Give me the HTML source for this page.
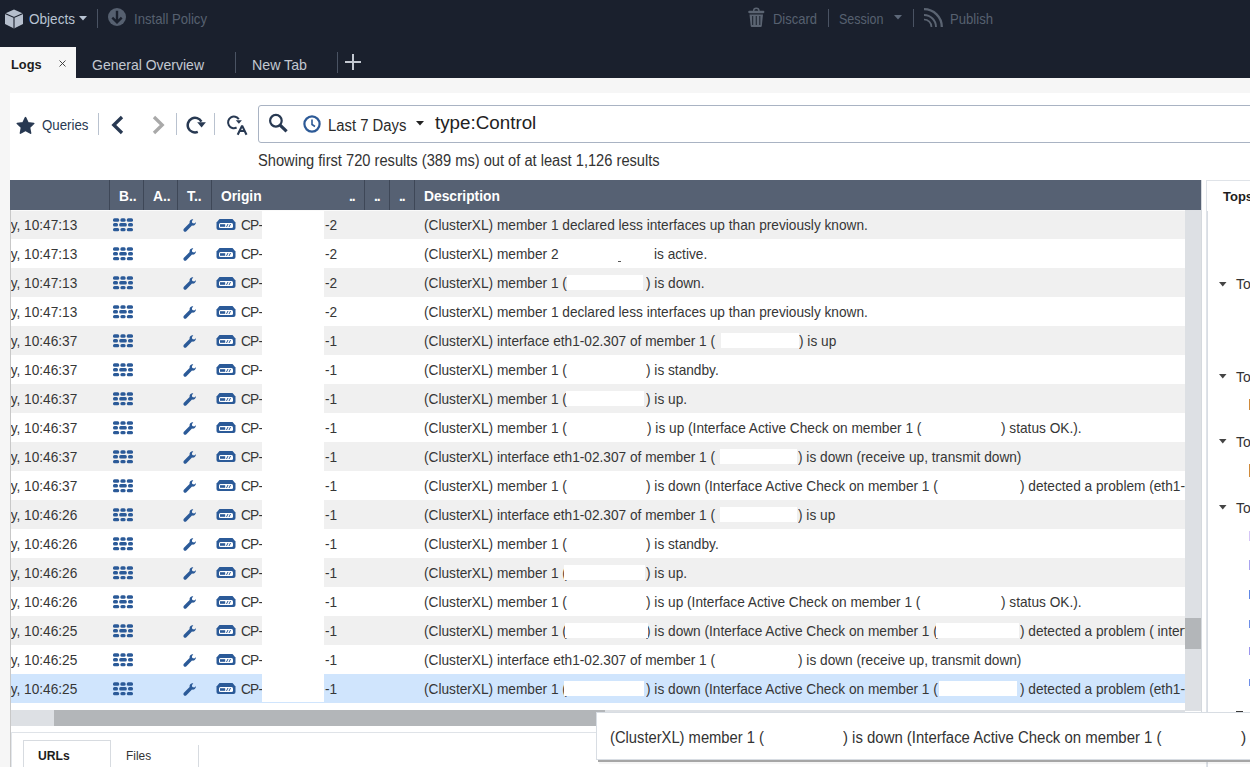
<!DOCTYPE html>
<html><head><meta charset="utf-8"><style>
*{margin:0;padding:0;box-sizing:border-box}
html,body{width:1250px;height:767px;overflow:hidden;background:#f6f6f6;font-family:"Liberation Sans", sans-serif;position:relative}
.abs{position:absolute;white-space:nowrap}
#top{position:absolute;left:0;top:0;width:1250px;height:78px;background:#1a202d}
.tb{position:absolute;font-size:13.3px;color:#576170;white-space:nowrap;line-height:16px}
.sep{position:absolute;width:1px;background:#4a5363}
.tab{position:absolute;font-size:14px;color:#c3c8d1;white-space:nowrap;line-height:16px}
#panel{position:absolute;left:10px;top:93px;width:1240px;height:674px;background:#fff}
#grid{position:absolute;left:10px;top:180px;width:1191px;height:531px;overflow:hidden;background:#fff}
#hdr{position:absolute;left:0;top:0;width:1191px;height:30px;background:#566173}
.hs{position:absolute;top:0;width:1px;height:30px;background:#3e4757}
.ht{position:absolute;top:9px;font-size:13.8px;font-weight:bold;color:#fff;white-space:nowrap;line-height:16px}
.row{position:absolute;left:0;width:1175px;height:29px;overflow:hidden}
.t{position:absolute;top:7px;font-size:14.5px;color:#363636;white-space:nowrap;line-height:16px;transform:scaleX(0.943);transform-origin:0 0}
.ic{position:absolute;line-height:0}
.ic svg{display:block}
.redact{position:absolute;top:0;width:62px;height:29px;background:#fff}
.box{position:absolute;top:7px;height:15px;background:#fff}
</style></head><body>
<div id="top">
  <svg class="abs" style="left:4px;top:9px" width="20" height="20" viewBox="0 0 20 20"><path d="M10 0.5 L19 4.5 V15 L10 19.5 L1 15 V4.5 Z" fill="#b6bfcd"/><path d="M1 4.5 L10 8.5 L19 4.5 M10 8.5 V19.5" stroke="#1a202d" stroke-width="1.1" fill="none"/></svg>
  <div class="tb" style="left:29px;top:11px;font-size:14.5px;color:#b8c3d3;transform-origin:0 0;transform:scaleX(0.935)">Objects</div>
  <svg class="abs" style="left:79px;top:16px" width="8" height="5"><path d="M0 0 H8 L4 4.5 Z" fill="#b8c3d3"/></svg>
  <div class="sep" style="left:97px;top:9px;height:19px"></div>
  <svg class="abs" style="left:108px;top:8px" width="18" height="18" viewBox="0 0 18 18"><circle cx="9" cy="9" r="9" fill="#566070"/><path d="M9 2.8 V14 M4.3 9.6 L9 14.3 L13.7 9.6" stroke="#1a202d" stroke-width="2.4" fill="none"/></svg>
  <div class="tb" style="left:134px;top:11px;font-size:14.5px;transform-origin:0 0;transform:scaleX(0.906)">Install Policy</div>
  <svg class="abs" style="left:748px;top:7px" width="17" height="21" viewBox="0 0 17 21"><path d="M5.6 4 A2.7 2.7 0 0 1 11 4" stroke="#5b6472" stroke-width="1.4" fill="none"/><rect x="0.2" y="3.8" width="16.2" height="2.4" rx="1.1" fill="#5b6472"/><path d="M1.5 7.5 H15 L13.8 19 Q13.7 20 12.7 20 H3.8 Q2.8 20 2.7 19 Z" fill="#5b6472"/><path d="M4.7 9 V18 M8.25 9 V18 M11.8 9 V18" stroke="#1a202d" stroke-width="1"/></svg>
  <div class="tb" style="left:773px;top:11px;font-size:14.5px;transform-origin:0 0;transform:scaleX(0.895)">Discard</div>
  <div class="sep" style="left:828px;top:9px;height:18px"></div>
  <div class="tb" style="left:839px;top:11px;font-size:14.5px;transform-origin:0 0;transform:scaleX(0.862)">Session</div>
  <svg class="abs" style="left:894px;top:15px" width="8" height="5"><path d="M0 0 H8 L4 4.5 Z" fill="#5d6879"/></svg>
  <div class="sep" style="left:913px;top:9px;height:18px"></div>
  <svg class="abs" style="left:918px;top:2px" width="32" height="30" viewBox="0 0 32 30"><path d="M6 7.2 A17.8 17.8 0 0 1 23.8 25" stroke="#5b6472" stroke-width="2.3" fill="none"/><path d="M6 13 A12 12 0 0 1 18 25" stroke="#5b6472" stroke-width="1.9" fill="none"/><path d="M6 17.5 A7.5 7.5 0 0 1 13.5 25" stroke="#5b6472" stroke-width="1.7" fill="none"/></svg>
  <div class="tb" style="left:950px;top:11px;font-size:14.5px;transform-origin:0 0;transform:scaleX(0.904)">Publish</div>
</div>
<div class="abs" style="left:0;top:47px;width:76px;height:31px;background:#f6f6f6"></div>
<div class="tab" style="left:11px;top:57px;font-weight:bold;color:#1d1d1d;font-size:12.8px">Logs</div>
<svg class="abs" style="left:59px;top:60px" width="7" height="7"><path d="M0.5 0.5 L6.5 6.5 M6.5 0.5 L0.5 6.5" stroke="#333" stroke-width="0.9"/></svg>
<div class="tab" style="left:92px;top:57px;font-size:14.5px;transform-origin:0 0;transform:scaleX(0.965)">General Overview</div>
<div class="sep" style="left:235px;top:52px;height:21px;background:#4a5363"></div>
<div class="tab" style="left:252px;top:57px;font-size:14.5px;transform-origin:0 0;transform:scaleX(0.979)">New Tab</div>
<div class="sep" style="left:337px;top:52px;height:21px;background:#4a5363"></div>
<svg class="abs" style="left:345px;top:54px" width="16" height="16"><path d="M8 0 V16 M0 8 H16" stroke="#c3c8d1" stroke-width="2"/></svg>

<div id="panel"></div>
<svg class="abs" style="left:16px;top:116px" width="19" height="18" viewBox="0 0 19 18"><path d="M9.50 1.60 L11.97 6.80 L17.68 7.54 L13.49 11.50 L14.55 17.16 L9.50 14.40 L4.45 17.16 L5.51 11.50 L1.32 7.54 L7.03 6.80 Z" fill="#283952" stroke="#283952" stroke-width="1.6" stroke-linejoin="round"/></svg>
<div class="abs" style="left:42px;top:117px;font-size:14.5px;color:#283952;line-height:16px;transform-origin:0 0;transform:scaleX(0.916)">Queries</div>
<div class="sep" style="left:98px;top:113px;height:22px;background:#b9c2cf"></div>
<svg class="abs" style="left:110px;top:115px" width="14" height="20"><path d="M12 2 L3.8 10 L12 18" stroke="#283952" stroke-width="3.3" fill="none"/></svg>
<svg class="abs" style="left:152px;top:115px" width="14" height="20"><path d="M2 2 L10.2 10 L2 18" stroke="#a9a9a9" stroke-width="3.3" fill="none"/></svg>
<div class="sep" style="left:176px;top:113px;height:22px;background:#b9c2cf"></div>
<svg class="abs" style="left:186px;top:115px" width="21" height="20" viewBox="0 0 21 20"><path d="M11.8 16.9 A7.3 7.3 0 1 1 15.4 6.6" stroke="#283952" stroke-width="2.5" fill="none"/><path d="M11.2 7.2 L19.9 7.2 L15.6 12.6 Z" fill="#283952"/></svg>
<div class="sep" style="left:214px;top:113px;height:22px;background:#b9c2cf"></div>
<svg class="abs" style="left:226px;top:115px" width="22" height="21" viewBox="0 0 22 21"><path d="M10.6 12.5 A5.8 5.8 0 1 1 12.8 4.3" stroke="#283952" stroke-width="2" fill="none"/><path d="M9.8 5.2 L15.9 5.2 L12.9 8.7 Z" fill="#283952"/><path d="M11.7 19.8 L16.1 10.6 L20.5 19.8 M13.3 16 H18.9" stroke="#283952" stroke-width="2.1" stroke-linejoin="bevel" fill="none"/></svg>
<div class="abs" style="left:258px;top:105px;width:1000px;height:38px;border:1px solid #a9b3c3;border-radius:3px;background:#fff"></div>
<svg class="abs" style="left:268px;top:113px" width="21" height="21" viewBox="0 0 21 21"><circle cx="7.9" cy="7.75" r="5.8" stroke="#283952" stroke-width="2.2" fill="none"/><path d="M11.8 11.8 L18.6 18.4" stroke="#283952" stroke-width="3.2"/></svg>
<svg class="abs" style="left:303px;top:115px" width="18" height="18" viewBox="0 0 18 18"><circle cx="9" cy="9" r="7.6" stroke="#2d5a97" stroke-width="2.2" fill="none"/><path d="M9 4.5 V9.5 L12 11.5" stroke="#2d5a97" stroke-width="1.6" fill="none"/></svg>
<div class="abs" style="left:328px;top:117px;font-size:15.6px;color:#2a2a2a;line-height:18px;transform:scaleX(0.953);transform-origin:0 0">Last 7 Days</div>
<svg class="abs" style="left:416px;top:121px" width="8" height="5"><path d="M0 0 H8 L4 4.5 Z" fill="#222"/></svg>
<div class="abs" style="left:435px;top:112px;font-size:18.8px;color:#222;line-height:22px">type:Control</div>
<div class="abs" style="left:258px;top:152px;font-size:15.6px;color:#333;line-height:17px;transform:scaleX(0.940);transform-origin:0 0">Showing first 720 results (389 ms) out of at least 1,126 results</div>

<div id="grid">
 <div id="hdr">
  <div class="hs" style="left:99px"></div><div class="hs" style="left:133px"></div><div class="hs" style="left:167px"></div><div class="hs" style="left:201px"></div>
  <div class="hs" style="left:354px"></div><div class="hs" style="left:379px"></div><div class="hs" style="left:404px"></div>
  <div class="ht" style="left:109px">B..</div><div class="ht" style="left:143px">A..</div><div class="ht" style="left:177px">T..</div>
  <div class="ht" style="left:211px">Origin</div>
  <div class="ht" style="left:339px;letter-spacing:-1px">..</div><div class="ht" style="left:364px;letter-spacing:-1px">..</div><div class="ht" style="left:389px;letter-spacing:-1px">..</div>
  <div class="ht" style="left:414px">Description</div>
 </div>
<div class="row" style="top:30px;background:#f0f0f0"><span class="t" style="left:-29px">Today, 10:47:13</span><span class="ic" style="left:103px;top:8px"><svg width="20" height="14" viewBox="0 0 20 14"><g fill="#2b5a98"><rect x="0" y="0.3" width="6.2" height="3.4" rx="1.5"/><rect x="7.4" y="0.3" width="5.2" height="3.4" rx="1.5"/><rect x="13.8" y="0.3" width="6.2" height="3.4" rx="1.5"/><rect x="0" y="5.1" width="5" height="3.4" rx="1.5"/><rect x="6.2" y="5.1" width="7.6" height="3.4" rx="1.5"/><rect x="15" y="5.1" width="5" height="3.4" rx="1.5"/><rect x="0" y="9.9" width="6.2" height="3.4" rx="1.5"/><rect x="7.4" y="9.9" width="5.2" height="3.4" rx="1.5"/><rect x="13.8" y="9.9" width="6.2" height="3.4" rx="1.5"/></g></svg></span><span class="ic" style="left:173px;top:9px"><svg width="14" height="14" viewBox="0 0 14 14"><path fill="#2b5a98" d="M9.2 0.3 C7.4 0.6 6.2 2.3 6.6 4.1 L0.9 9.8 C0.1 10.6 0.3 11.8 1.1 12.4 C1.8 13 2.8 12.9 3.4 12.2 L9 6.6 C10.8 7 12.6 5.8 12.9 4 L13 3.2 L11.2 4.6 L9.3 4.1 L8.9 2.3 L10.3 0.3 Z"/></svg></span><span class="ic" style="left:206px;top:9px"><svg width="20" height="11" viewBox="0 0 20 11"><path fill="#2b5a98" d="M3.5 0 H16.5 L19.5 3.5 V9 Q19.5 11 17.5 11 H2.5 Q0.5 11 0.5 9 V3.5 Z"/><rect x="3" y="4" width="14" height="5" rx="1.5" fill="#fff"/><rect x="4" y="5.2" width="5.2" height="2.6" fill="#2b5a98"/><path d="M10.5 8 L12 5 M13 8 L14.5 5" stroke="#2b5a98" stroke-width="1"/></svg></span><span class="t" style="left:231px;letter-spacing:-0.8px">CP-</span><span class="redact" style="left:252px"></span><span class="t" style="left:315px">-2</span><span class="t" style="left:414px">(ClusterXL) member 1 declared less interfaces up than previously known.</span></div>
<div class="row" style="top:59px;background:#ffffff"><span class="t" style="left:-29px">Today, 10:47:13</span><span class="ic" style="left:103px;top:8px"><svg width="20" height="14" viewBox="0 0 20 14"><g fill="#2b5a98"><rect x="0" y="0.3" width="6.2" height="3.4" rx="1.5"/><rect x="7.4" y="0.3" width="5.2" height="3.4" rx="1.5"/><rect x="13.8" y="0.3" width="6.2" height="3.4" rx="1.5"/><rect x="0" y="5.1" width="5" height="3.4" rx="1.5"/><rect x="6.2" y="5.1" width="7.6" height="3.4" rx="1.5"/><rect x="15" y="5.1" width="5" height="3.4" rx="1.5"/><rect x="0" y="9.9" width="6.2" height="3.4" rx="1.5"/><rect x="7.4" y="9.9" width="5.2" height="3.4" rx="1.5"/><rect x="13.8" y="9.9" width="6.2" height="3.4" rx="1.5"/></g></svg></span><span class="ic" style="left:173px;top:9px"><svg width="14" height="14" viewBox="0 0 14 14"><path fill="#2b5a98" d="M9.2 0.3 C7.4 0.6 6.2 2.3 6.6 4.1 L0.9 9.8 C0.1 10.6 0.3 11.8 1.1 12.4 C1.8 13 2.8 12.9 3.4 12.2 L9 6.6 C10.8 7 12.6 5.8 12.9 4 L13 3.2 L11.2 4.6 L9.3 4.1 L8.9 2.3 L10.3 0.3 Z"/></svg></span><span class="ic" style="left:206px;top:9px"><svg width="20" height="11" viewBox="0 0 20 11"><path fill="#2b5a98" d="M3.5 0 H16.5 L19.5 3.5 V9 Q19.5 11 17.5 11 H2.5 Q0.5 11 0.5 9 V3.5 Z"/><rect x="3" y="4" width="14" height="5" rx="1.5" fill="#fff"/><rect x="4" y="5.2" width="5.2" height="2.6" fill="#2b5a98"/><path d="M10.5 8 L12 5 M13 8 L14.5 5" stroke="#2b5a98" stroke-width="1"/></svg></span><span class="t" style="left:231px;letter-spacing:-0.8px">CP-</span><span class="redact" style="left:252px"></span><span class="t" style="left:315px">-2</span><span class="t" style="left:414px">(ClusterXL) member 2</span><span class="t" style="left:644px">is active.</span><span style="position:absolute;left:608px;top:22px;width:3px;height:1px;background:#555"></span></div>
<div class="row" style="top:88px;background:#f0f0f0"><span class="t" style="left:-29px">Today, 10:47:13</span><span class="ic" style="left:103px;top:8px"><svg width="20" height="14" viewBox="0 0 20 14"><g fill="#2b5a98"><rect x="0" y="0.3" width="6.2" height="3.4" rx="1.5"/><rect x="7.4" y="0.3" width="5.2" height="3.4" rx="1.5"/><rect x="13.8" y="0.3" width="6.2" height="3.4" rx="1.5"/><rect x="0" y="5.1" width="5" height="3.4" rx="1.5"/><rect x="6.2" y="5.1" width="7.6" height="3.4" rx="1.5"/><rect x="15" y="5.1" width="5" height="3.4" rx="1.5"/><rect x="0" y="9.9" width="6.2" height="3.4" rx="1.5"/><rect x="7.4" y="9.9" width="5.2" height="3.4" rx="1.5"/><rect x="13.8" y="9.9" width="6.2" height="3.4" rx="1.5"/></g></svg></span><span class="ic" style="left:173px;top:9px"><svg width="14" height="14" viewBox="0 0 14 14"><path fill="#2b5a98" d="M9.2 0.3 C7.4 0.6 6.2 2.3 6.6 4.1 L0.9 9.8 C0.1 10.6 0.3 11.8 1.1 12.4 C1.8 13 2.8 12.9 3.4 12.2 L9 6.6 C10.8 7 12.6 5.8 12.9 4 L13 3.2 L11.2 4.6 L9.3 4.1 L8.9 2.3 L10.3 0.3 Z"/></svg></span><span class="ic" style="left:206px;top:9px"><svg width="20" height="11" viewBox="0 0 20 11"><path fill="#2b5a98" d="M3.5 0 H16.5 L19.5 3.5 V9 Q19.5 11 17.5 11 H2.5 Q0.5 11 0.5 9 V3.5 Z"/><rect x="3" y="4" width="14" height="5" rx="1.5" fill="#fff"/><rect x="4" y="5.2" width="5.2" height="2.6" fill="#2b5a98"/><path d="M10.5 8 L12 5 M13 8 L14.5 5" stroke="#2b5a98" stroke-width="1"/></svg></span><span class="t" style="left:231px;letter-spacing:-0.8px">CP-</span><span class="redact" style="left:252px"></span><span class="t" style="left:315px">-2</span><span class="t" style="left:414px">(ClusterXL) member 1 (</span><span class="t" style="left:636px">) is down.</span><span class="box" style="left:557px;width:76px"></span></div>
<div class="row" style="top:117px;background:#ffffff"><span class="t" style="left:-29px">Today, 10:47:13</span><span class="ic" style="left:103px;top:8px"><svg width="20" height="14" viewBox="0 0 20 14"><g fill="#2b5a98"><rect x="0" y="0.3" width="6.2" height="3.4" rx="1.5"/><rect x="7.4" y="0.3" width="5.2" height="3.4" rx="1.5"/><rect x="13.8" y="0.3" width="6.2" height="3.4" rx="1.5"/><rect x="0" y="5.1" width="5" height="3.4" rx="1.5"/><rect x="6.2" y="5.1" width="7.6" height="3.4" rx="1.5"/><rect x="15" y="5.1" width="5" height="3.4" rx="1.5"/><rect x="0" y="9.9" width="6.2" height="3.4" rx="1.5"/><rect x="7.4" y="9.9" width="5.2" height="3.4" rx="1.5"/><rect x="13.8" y="9.9" width="6.2" height="3.4" rx="1.5"/></g></svg></span><span class="ic" style="left:173px;top:9px"><svg width="14" height="14" viewBox="0 0 14 14"><path fill="#2b5a98" d="M9.2 0.3 C7.4 0.6 6.2 2.3 6.6 4.1 L0.9 9.8 C0.1 10.6 0.3 11.8 1.1 12.4 C1.8 13 2.8 12.9 3.4 12.2 L9 6.6 C10.8 7 12.6 5.8 12.9 4 L13 3.2 L11.2 4.6 L9.3 4.1 L8.9 2.3 L10.3 0.3 Z"/></svg></span><span class="ic" style="left:206px;top:9px"><svg width="20" height="11" viewBox="0 0 20 11"><path fill="#2b5a98" d="M3.5 0 H16.5 L19.5 3.5 V9 Q19.5 11 17.5 11 H2.5 Q0.5 11 0.5 9 V3.5 Z"/><rect x="3" y="4" width="14" height="5" rx="1.5" fill="#fff"/><rect x="4" y="5.2" width="5.2" height="2.6" fill="#2b5a98"/><path d="M10.5 8 L12 5 M13 8 L14.5 5" stroke="#2b5a98" stroke-width="1"/></svg></span><span class="t" style="left:231px;letter-spacing:-0.8px">CP-</span><span class="redact" style="left:252px"></span><span class="t" style="left:315px">-2</span><span class="t" style="left:414px">(ClusterXL) member 1 declared less interfaces up than previously known.</span></div>
<div class="row" style="top:146px;background:#f0f0f0"><span class="t" style="left:-29px">Today, 10:46:37</span><span class="ic" style="left:103px;top:8px"><svg width="20" height="14" viewBox="0 0 20 14"><g fill="#2b5a98"><rect x="0" y="0.3" width="6.2" height="3.4" rx="1.5"/><rect x="7.4" y="0.3" width="5.2" height="3.4" rx="1.5"/><rect x="13.8" y="0.3" width="6.2" height="3.4" rx="1.5"/><rect x="0" y="5.1" width="5" height="3.4" rx="1.5"/><rect x="6.2" y="5.1" width="7.6" height="3.4" rx="1.5"/><rect x="15" y="5.1" width="5" height="3.4" rx="1.5"/><rect x="0" y="9.9" width="6.2" height="3.4" rx="1.5"/><rect x="7.4" y="9.9" width="5.2" height="3.4" rx="1.5"/><rect x="13.8" y="9.9" width="6.2" height="3.4" rx="1.5"/></g></svg></span><span class="ic" style="left:173px;top:9px"><svg width="14" height="14" viewBox="0 0 14 14"><path fill="#2b5a98" d="M9.2 0.3 C7.4 0.6 6.2 2.3 6.6 4.1 L0.9 9.8 C0.1 10.6 0.3 11.8 1.1 12.4 C1.8 13 2.8 12.9 3.4 12.2 L9 6.6 C10.8 7 12.6 5.8 12.9 4 L13 3.2 L11.2 4.6 L9.3 4.1 L8.9 2.3 L10.3 0.3 Z"/></svg></span><span class="ic" style="left:206px;top:9px"><svg width="20" height="11" viewBox="0 0 20 11"><path fill="#2b5a98" d="M3.5 0 H16.5 L19.5 3.5 V9 Q19.5 11 17.5 11 H2.5 Q0.5 11 0.5 9 V3.5 Z"/><rect x="3" y="4" width="14" height="5" rx="1.5" fill="#fff"/><rect x="4" y="5.2" width="5.2" height="2.6" fill="#2b5a98"/><path d="M10.5 8 L12 5 M13 8 L14.5 5" stroke="#2b5a98" stroke-width="1"/></svg></span><span class="t" style="left:231px;letter-spacing:-0.8px">CP-</span><span class="redact" style="left:252px"></span><span class="t" style="left:315px">-1</span><span class="t" style="left:414px">(ClusterXL) interface eth1-02.307 of member 1 (</span><span class="t" style="left:789px">) is up</span><span class="box" style="left:711px;width:78px"></span></div>
<div class="row" style="top:175px;background:#ffffff"><span class="t" style="left:-29px">Today, 10:46:37</span><span class="ic" style="left:103px;top:8px"><svg width="20" height="14" viewBox="0 0 20 14"><g fill="#2b5a98"><rect x="0" y="0.3" width="6.2" height="3.4" rx="1.5"/><rect x="7.4" y="0.3" width="5.2" height="3.4" rx="1.5"/><rect x="13.8" y="0.3" width="6.2" height="3.4" rx="1.5"/><rect x="0" y="5.1" width="5" height="3.4" rx="1.5"/><rect x="6.2" y="5.1" width="7.6" height="3.4" rx="1.5"/><rect x="15" y="5.1" width="5" height="3.4" rx="1.5"/><rect x="0" y="9.9" width="6.2" height="3.4" rx="1.5"/><rect x="7.4" y="9.9" width="5.2" height="3.4" rx="1.5"/><rect x="13.8" y="9.9" width="6.2" height="3.4" rx="1.5"/></g></svg></span><span class="ic" style="left:173px;top:9px"><svg width="14" height="14" viewBox="0 0 14 14"><path fill="#2b5a98" d="M9.2 0.3 C7.4 0.6 6.2 2.3 6.6 4.1 L0.9 9.8 C0.1 10.6 0.3 11.8 1.1 12.4 C1.8 13 2.8 12.9 3.4 12.2 L9 6.6 C10.8 7 12.6 5.8 12.9 4 L13 3.2 L11.2 4.6 L9.3 4.1 L8.9 2.3 L10.3 0.3 Z"/></svg></span><span class="ic" style="left:206px;top:9px"><svg width="20" height="11" viewBox="0 0 20 11"><path fill="#2b5a98" d="M3.5 0 H16.5 L19.5 3.5 V9 Q19.5 11 17.5 11 H2.5 Q0.5 11 0.5 9 V3.5 Z"/><rect x="3" y="4" width="14" height="5" rx="1.5" fill="#fff"/><rect x="4" y="5.2" width="5.2" height="2.6" fill="#2b5a98"/><path d="M10.5 8 L12 5 M13 8 L14.5 5" stroke="#2b5a98" stroke-width="1"/></svg></span><span class="t" style="left:231px;letter-spacing:-0.8px">CP-</span><span class="redact" style="left:252px"></span><span class="t" style="left:315px">-1</span><span class="t" style="left:414px">(ClusterXL) member 1 (</span><span class="t" style="left:636px">) is standby.</span></div>
<div class="row" style="top:204px;background:#f0f0f0"><span class="t" style="left:-29px">Today, 10:46:37</span><span class="ic" style="left:103px;top:8px"><svg width="20" height="14" viewBox="0 0 20 14"><g fill="#2b5a98"><rect x="0" y="0.3" width="6.2" height="3.4" rx="1.5"/><rect x="7.4" y="0.3" width="5.2" height="3.4" rx="1.5"/><rect x="13.8" y="0.3" width="6.2" height="3.4" rx="1.5"/><rect x="0" y="5.1" width="5" height="3.4" rx="1.5"/><rect x="6.2" y="5.1" width="7.6" height="3.4" rx="1.5"/><rect x="15" y="5.1" width="5" height="3.4" rx="1.5"/><rect x="0" y="9.9" width="6.2" height="3.4" rx="1.5"/><rect x="7.4" y="9.9" width="5.2" height="3.4" rx="1.5"/><rect x="13.8" y="9.9" width="6.2" height="3.4" rx="1.5"/></g></svg></span><span class="ic" style="left:173px;top:9px"><svg width="14" height="14" viewBox="0 0 14 14"><path fill="#2b5a98" d="M9.2 0.3 C7.4 0.6 6.2 2.3 6.6 4.1 L0.9 9.8 C0.1 10.6 0.3 11.8 1.1 12.4 C1.8 13 2.8 12.9 3.4 12.2 L9 6.6 C10.8 7 12.6 5.8 12.9 4 L13 3.2 L11.2 4.6 L9.3 4.1 L8.9 2.3 L10.3 0.3 Z"/></svg></span><span class="ic" style="left:206px;top:9px"><svg width="20" height="11" viewBox="0 0 20 11"><path fill="#2b5a98" d="M3.5 0 H16.5 L19.5 3.5 V9 Q19.5 11 17.5 11 H2.5 Q0.5 11 0.5 9 V3.5 Z"/><rect x="3" y="4" width="14" height="5" rx="1.5" fill="#fff"/><rect x="4" y="5.2" width="5.2" height="2.6" fill="#2b5a98"/><path d="M10.5 8 L12 5 M13 8 L14.5 5" stroke="#2b5a98" stroke-width="1"/></svg></span><span class="t" style="left:231px;letter-spacing:-0.8px">CP-</span><span class="redact" style="left:252px"></span><span class="t" style="left:315px">-1</span><span class="t" style="left:414px">(ClusterXL) member 1 (</span><span class="t" style="left:636px">) is up.</span><span class="box" style="left:556px;width:78px"></span></div>
<div class="row" style="top:233px;background:#ffffff"><span class="t" style="left:-29px">Today, 10:46:37</span><span class="ic" style="left:103px;top:8px"><svg width="20" height="14" viewBox="0 0 20 14"><g fill="#2b5a98"><rect x="0" y="0.3" width="6.2" height="3.4" rx="1.5"/><rect x="7.4" y="0.3" width="5.2" height="3.4" rx="1.5"/><rect x="13.8" y="0.3" width="6.2" height="3.4" rx="1.5"/><rect x="0" y="5.1" width="5" height="3.4" rx="1.5"/><rect x="6.2" y="5.1" width="7.6" height="3.4" rx="1.5"/><rect x="15" y="5.1" width="5" height="3.4" rx="1.5"/><rect x="0" y="9.9" width="6.2" height="3.4" rx="1.5"/><rect x="7.4" y="9.9" width="5.2" height="3.4" rx="1.5"/><rect x="13.8" y="9.9" width="6.2" height="3.4" rx="1.5"/></g></svg></span><span class="ic" style="left:173px;top:9px"><svg width="14" height="14" viewBox="0 0 14 14"><path fill="#2b5a98" d="M9.2 0.3 C7.4 0.6 6.2 2.3 6.6 4.1 L0.9 9.8 C0.1 10.6 0.3 11.8 1.1 12.4 C1.8 13 2.8 12.9 3.4 12.2 L9 6.6 C10.8 7 12.6 5.8 12.9 4 L13 3.2 L11.2 4.6 L9.3 4.1 L8.9 2.3 L10.3 0.3 Z"/></svg></span><span class="ic" style="left:206px;top:9px"><svg width="20" height="11" viewBox="0 0 20 11"><path fill="#2b5a98" d="M3.5 0 H16.5 L19.5 3.5 V9 Q19.5 11 17.5 11 H2.5 Q0.5 11 0.5 9 V3.5 Z"/><rect x="3" y="4" width="14" height="5" rx="1.5" fill="#fff"/><rect x="4" y="5.2" width="5.2" height="2.6" fill="#2b5a98"/><path d="M10.5 8 L12 5 M13 8 L14.5 5" stroke="#2b5a98" stroke-width="1"/></svg></span><span class="t" style="left:231px;letter-spacing:-0.8px">CP-</span><span class="redact" style="left:252px"></span><span class="t" style="left:315px">-1</span><span class="t" style="left:414px">(ClusterXL) member 1 (</span><span class="t" style="left:637px">) is up (Interface Active Check on member 1 (</span><span class="t" style="left:991px">) status OK.).</span></div>
<div class="row" style="top:262px;background:#f0f0f0"><span class="t" style="left:-29px">Today, 10:46:37</span><span class="ic" style="left:103px;top:8px"><svg width="20" height="14" viewBox="0 0 20 14"><g fill="#2b5a98"><rect x="0" y="0.3" width="6.2" height="3.4" rx="1.5"/><rect x="7.4" y="0.3" width="5.2" height="3.4" rx="1.5"/><rect x="13.8" y="0.3" width="6.2" height="3.4" rx="1.5"/><rect x="0" y="5.1" width="5" height="3.4" rx="1.5"/><rect x="6.2" y="5.1" width="7.6" height="3.4" rx="1.5"/><rect x="15" y="5.1" width="5" height="3.4" rx="1.5"/><rect x="0" y="9.9" width="6.2" height="3.4" rx="1.5"/><rect x="7.4" y="9.9" width="5.2" height="3.4" rx="1.5"/><rect x="13.8" y="9.9" width="6.2" height="3.4" rx="1.5"/></g></svg></span><span class="ic" style="left:173px;top:9px"><svg width="14" height="14" viewBox="0 0 14 14"><path fill="#2b5a98" d="M9.2 0.3 C7.4 0.6 6.2 2.3 6.6 4.1 L0.9 9.8 C0.1 10.6 0.3 11.8 1.1 12.4 C1.8 13 2.8 12.9 3.4 12.2 L9 6.6 C10.8 7 12.6 5.8 12.9 4 L13 3.2 L11.2 4.6 L9.3 4.1 L8.9 2.3 L10.3 0.3 Z"/></svg></span><span class="ic" style="left:206px;top:9px"><svg width="20" height="11" viewBox="0 0 20 11"><path fill="#2b5a98" d="M3.5 0 H16.5 L19.5 3.5 V9 Q19.5 11 17.5 11 H2.5 Q0.5 11 0.5 9 V3.5 Z"/><rect x="3" y="4" width="14" height="5" rx="1.5" fill="#fff"/><rect x="4" y="5.2" width="5.2" height="2.6" fill="#2b5a98"/><path d="M10.5 8 L12 5 M13 8 L14.5 5" stroke="#2b5a98" stroke-width="1"/></svg></span><span class="t" style="left:231px;letter-spacing:-0.8px">CP-</span><span class="redact" style="left:252px"></span><span class="t" style="left:315px">-1</span><span class="t" style="left:414px">(ClusterXL) interface eth1-02.307 of member 1 (</span><span class="t" style="left:788px">) is down (receive up, transmit down)</span><span class="box" style="left:710px;width:77px"></span></div>
<div class="row" style="top:291px;background:#ffffff"><span class="t" style="left:-29px">Today, 10:46:37</span><span class="ic" style="left:103px;top:8px"><svg width="20" height="14" viewBox="0 0 20 14"><g fill="#2b5a98"><rect x="0" y="0.3" width="6.2" height="3.4" rx="1.5"/><rect x="7.4" y="0.3" width="5.2" height="3.4" rx="1.5"/><rect x="13.8" y="0.3" width="6.2" height="3.4" rx="1.5"/><rect x="0" y="5.1" width="5" height="3.4" rx="1.5"/><rect x="6.2" y="5.1" width="7.6" height="3.4" rx="1.5"/><rect x="15" y="5.1" width="5" height="3.4" rx="1.5"/><rect x="0" y="9.9" width="6.2" height="3.4" rx="1.5"/><rect x="7.4" y="9.9" width="5.2" height="3.4" rx="1.5"/><rect x="13.8" y="9.9" width="6.2" height="3.4" rx="1.5"/></g></svg></span><span class="ic" style="left:173px;top:9px"><svg width="14" height="14" viewBox="0 0 14 14"><path fill="#2b5a98" d="M9.2 0.3 C7.4 0.6 6.2 2.3 6.6 4.1 L0.9 9.8 C0.1 10.6 0.3 11.8 1.1 12.4 C1.8 13 2.8 12.9 3.4 12.2 L9 6.6 C10.8 7 12.6 5.8 12.9 4 L13 3.2 L11.2 4.6 L9.3 4.1 L8.9 2.3 L10.3 0.3 Z"/></svg></span><span class="ic" style="left:206px;top:9px"><svg width="20" height="11" viewBox="0 0 20 11"><path fill="#2b5a98" d="M3.5 0 H16.5 L19.5 3.5 V9 Q19.5 11 17.5 11 H2.5 Q0.5 11 0.5 9 V3.5 Z"/><rect x="3" y="4" width="14" height="5" rx="1.5" fill="#fff"/><rect x="4" y="5.2" width="5.2" height="2.6" fill="#2b5a98"/><path d="M10.5 8 L12 5 M13 8 L14.5 5" stroke="#2b5a98" stroke-width="1"/></svg></span><span class="t" style="left:231px;letter-spacing:-0.8px">CP-</span><span class="redact" style="left:252px"></span><span class="t" style="left:315px">-1</span><span class="t" style="left:414px">(ClusterXL) member 1 (</span><span class="t" style="left:636px">) is down (Interface Active Check on member 1 (</span><span class="t" style="left:1010px">) detected a problem (eth1-02.307)</span></div>
<div class="row" style="top:320px;background:#f0f0f0"><span class="t" style="left:-29px">Today, 10:46:26</span><span class="ic" style="left:103px;top:8px"><svg width="20" height="14" viewBox="0 0 20 14"><g fill="#2b5a98"><rect x="0" y="0.3" width="6.2" height="3.4" rx="1.5"/><rect x="7.4" y="0.3" width="5.2" height="3.4" rx="1.5"/><rect x="13.8" y="0.3" width="6.2" height="3.4" rx="1.5"/><rect x="0" y="5.1" width="5" height="3.4" rx="1.5"/><rect x="6.2" y="5.1" width="7.6" height="3.4" rx="1.5"/><rect x="15" y="5.1" width="5" height="3.4" rx="1.5"/><rect x="0" y="9.9" width="6.2" height="3.4" rx="1.5"/><rect x="7.4" y="9.9" width="5.2" height="3.4" rx="1.5"/><rect x="13.8" y="9.9" width="6.2" height="3.4" rx="1.5"/></g></svg></span><span class="ic" style="left:173px;top:9px"><svg width="14" height="14" viewBox="0 0 14 14"><path fill="#2b5a98" d="M9.2 0.3 C7.4 0.6 6.2 2.3 6.6 4.1 L0.9 9.8 C0.1 10.6 0.3 11.8 1.1 12.4 C1.8 13 2.8 12.9 3.4 12.2 L9 6.6 C10.8 7 12.6 5.8 12.9 4 L13 3.2 L11.2 4.6 L9.3 4.1 L8.9 2.3 L10.3 0.3 Z"/></svg></span><span class="ic" style="left:206px;top:9px"><svg width="20" height="11" viewBox="0 0 20 11"><path fill="#2b5a98" d="M3.5 0 H16.5 L19.5 3.5 V9 Q19.5 11 17.5 11 H2.5 Q0.5 11 0.5 9 V3.5 Z"/><rect x="3" y="4" width="14" height="5" rx="1.5" fill="#fff"/><rect x="4" y="5.2" width="5.2" height="2.6" fill="#2b5a98"/><path d="M10.5 8 L12 5 M13 8 L14.5 5" stroke="#2b5a98" stroke-width="1"/></svg></span><span class="t" style="left:231px;letter-spacing:-0.8px">CP-</span><span class="redact" style="left:252px"></span><span class="t" style="left:315px">-1</span><span class="t" style="left:414px">(ClusterXL) interface eth1-02.307 of member 1 (</span><span class="t" style="left:788px">) is up</span><span class="box" style="left:710px;width:77px"></span></div>
<div class="row" style="top:349px;background:#ffffff"><span class="t" style="left:-29px">Today, 10:46:26</span><span class="ic" style="left:103px;top:8px"><svg width="20" height="14" viewBox="0 0 20 14"><g fill="#2b5a98"><rect x="0" y="0.3" width="6.2" height="3.4" rx="1.5"/><rect x="7.4" y="0.3" width="5.2" height="3.4" rx="1.5"/><rect x="13.8" y="0.3" width="6.2" height="3.4" rx="1.5"/><rect x="0" y="5.1" width="5" height="3.4" rx="1.5"/><rect x="6.2" y="5.1" width="7.6" height="3.4" rx="1.5"/><rect x="15" y="5.1" width="5" height="3.4" rx="1.5"/><rect x="0" y="9.9" width="6.2" height="3.4" rx="1.5"/><rect x="7.4" y="9.9" width="5.2" height="3.4" rx="1.5"/><rect x="13.8" y="9.9" width="6.2" height="3.4" rx="1.5"/></g></svg></span><span class="ic" style="left:173px;top:9px"><svg width="14" height="14" viewBox="0 0 14 14"><path fill="#2b5a98" d="M9.2 0.3 C7.4 0.6 6.2 2.3 6.6 4.1 L0.9 9.8 C0.1 10.6 0.3 11.8 1.1 12.4 C1.8 13 2.8 12.9 3.4 12.2 L9 6.6 C10.8 7 12.6 5.8 12.9 4 L13 3.2 L11.2 4.6 L9.3 4.1 L8.9 2.3 L10.3 0.3 Z"/></svg></span><span class="ic" style="left:206px;top:9px"><svg width="20" height="11" viewBox="0 0 20 11"><path fill="#2b5a98" d="M3.5 0 H16.5 L19.5 3.5 V9 Q19.5 11 17.5 11 H2.5 Q0.5 11 0.5 9 V3.5 Z"/><rect x="3" y="4" width="14" height="5" rx="1.5" fill="#fff"/><rect x="4" y="5.2" width="5.2" height="2.6" fill="#2b5a98"/><path d="M10.5 8 L12 5 M13 8 L14.5 5" stroke="#2b5a98" stroke-width="1"/></svg></span><span class="t" style="left:231px;letter-spacing:-0.8px">CP-</span><span class="redact" style="left:252px"></span><span class="t" style="left:315px">-1</span><span class="t" style="left:414px">(ClusterXL) member 1 (</span><span class="t" style="left:636px">) is standby.</span></div>
<div class="row" style="top:378px;background:#f0f0f0"><span class="t" style="left:-29px">Today, 10:46:26</span><span class="ic" style="left:103px;top:8px"><svg width="20" height="14" viewBox="0 0 20 14"><g fill="#2b5a98"><rect x="0" y="0.3" width="6.2" height="3.4" rx="1.5"/><rect x="7.4" y="0.3" width="5.2" height="3.4" rx="1.5"/><rect x="13.8" y="0.3" width="6.2" height="3.4" rx="1.5"/><rect x="0" y="5.1" width="5" height="3.4" rx="1.5"/><rect x="6.2" y="5.1" width="7.6" height="3.4" rx="1.5"/><rect x="15" y="5.1" width="5" height="3.4" rx="1.5"/><rect x="0" y="9.9" width="6.2" height="3.4" rx="1.5"/><rect x="7.4" y="9.9" width="5.2" height="3.4" rx="1.5"/><rect x="13.8" y="9.9" width="6.2" height="3.4" rx="1.5"/></g></svg></span><span class="ic" style="left:173px;top:9px"><svg width="14" height="14" viewBox="0 0 14 14"><path fill="#2b5a98" d="M9.2 0.3 C7.4 0.6 6.2 2.3 6.6 4.1 L0.9 9.8 C0.1 10.6 0.3 11.8 1.1 12.4 C1.8 13 2.8 12.9 3.4 12.2 L9 6.6 C10.8 7 12.6 5.8 12.9 4 L13 3.2 L11.2 4.6 L9.3 4.1 L8.9 2.3 L10.3 0.3 Z"/></svg></span><span class="ic" style="left:206px;top:9px"><svg width="20" height="11" viewBox="0 0 20 11"><path fill="#2b5a98" d="M3.5 0 H16.5 L19.5 3.5 V9 Q19.5 11 17.5 11 H2.5 Q0.5 11 0.5 9 V3.5 Z"/><rect x="3" y="4" width="14" height="5" rx="1.5" fill="#fff"/><rect x="4" y="5.2" width="5.2" height="2.6" fill="#2b5a98"/><path d="M10.5 8 L12 5 M13 8 L14.5 5" stroke="#2b5a98" stroke-width="1"/></svg></span><span class="t" style="left:231px;letter-spacing:-0.8px">CP-</span><span class="redact" style="left:252px"></span><span class="t" style="left:315px">-1</span><span class="t" style="left:414px">(ClusterXL) member 1 (</span><span class="t" style="left:636px">) is up.</span><span class="box" style="left:554px;width:81px"></span></div>
<div class="row" style="top:407px;background:#ffffff"><span class="t" style="left:-29px">Today, 10:46:26</span><span class="ic" style="left:103px;top:8px"><svg width="20" height="14" viewBox="0 0 20 14"><g fill="#2b5a98"><rect x="0" y="0.3" width="6.2" height="3.4" rx="1.5"/><rect x="7.4" y="0.3" width="5.2" height="3.4" rx="1.5"/><rect x="13.8" y="0.3" width="6.2" height="3.4" rx="1.5"/><rect x="0" y="5.1" width="5" height="3.4" rx="1.5"/><rect x="6.2" y="5.1" width="7.6" height="3.4" rx="1.5"/><rect x="15" y="5.1" width="5" height="3.4" rx="1.5"/><rect x="0" y="9.9" width="6.2" height="3.4" rx="1.5"/><rect x="7.4" y="9.9" width="5.2" height="3.4" rx="1.5"/><rect x="13.8" y="9.9" width="6.2" height="3.4" rx="1.5"/></g></svg></span><span class="ic" style="left:173px;top:9px"><svg width="14" height="14" viewBox="0 0 14 14"><path fill="#2b5a98" d="M9.2 0.3 C7.4 0.6 6.2 2.3 6.6 4.1 L0.9 9.8 C0.1 10.6 0.3 11.8 1.1 12.4 C1.8 13 2.8 12.9 3.4 12.2 L9 6.6 C10.8 7 12.6 5.8 12.9 4 L13 3.2 L11.2 4.6 L9.3 4.1 L8.9 2.3 L10.3 0.3 Z"/></svg></span><span class="ic" style="left:206px;top:9px"><svg width="20" height="11" viewBox="0 0 20 11"><path fill="#2b5a98" d="M3.5 0 H16.5 L19.5 3.5 V9 Q19.5 11 17.5 11 H2.5 Q0.5 11 0.5 9 V3.5 Z"/><rect x="3" y="4" width="14" height="5" rx="1.5" fill="#fff"/><rect x="4" y="5.2" width="5.2" height="2.6" fill="#2b5a98"/><path d="M10.5 8 L12 5 M13 8 L14.5 5" stroke="#2b5a98" stroke-width="1"/></svg></span><span class="t" style="left:231px;letter-spacing:-0.8px">CP-</span><span class="redact" style="left:252px"></span><span class="t" style="left:315px">-1</span><span class="t" style="left:414px">(ClusterXL) member 1 (</span><span class="t" style="left:636px">) is up (Interface Active Check on member 1 (</span><span class="t" style="left:991px">) status OK.).</span></div>
<div class="row" style="top:436px;background:#f0f0f0"><span class="t" style="left:-29px">Today, 10:46:25</span><span class="ic" style="left:103px;top:8px"><svg width="20" height="14" viewBox="0 0 20 14"><g fill="#2b5a98"><rect x="0" y="0.3" width="6.2" height="3.4" rx="1.5"/><rect x="7.4" y="0.3" width="5.2" height="3.4" rx="1.5"/><rect x="13.8" y="0.3" width="6.2" height="3.4" rx="1.5"/><rect x="0" y="5.1" width="5" height="3.4" rx="1.5"/><rect x="6.2" y="5.1" width="7.6" height="3.4" rx="1.5"/><rect x="15" y="5.1" width="5" height="3.4" rx="1.5"/><rect x="0" y="9.9" width="6.2" height="3.4" rx="1.5"/><rect x="7.4" y="9.9" width="5.2" height="3.4" rx="1.5"/><rect x="13.8" y="9.9" width="6.2" height="3.4" rx="1.5"/></g></svg></span><span class="ic" style="left:173px;top:9px"><svg width="14" height="14" viewBox="0 0 14 14"><path fill="#2b5a98" d="M9.2 0.3 C7.4 0.6 6.2 2.3 6.6 4.1 L0.9 9.8 C0.1 10.6 0.3 11.8 1.1 12.4 C1.8 13 2.8 12.9 3.4 12.2 L9 6.6 C10.8 7 12.6 5.8 12.9 4 L13 3.2 L11.2 4.6 L9.3 4.1 L8.9 2.3 L10.3 0.3 Z"/></svg></span><span class="ic" style="left:206px;top:9px"><svg width="20" height="11" viewBox="0 0 20 11"><path fill="#2b5a98" d="M3.5 0 H16.5 L19.5 3.5 V9 Q19.5 11 17.5 11 H2.5 Q0.5 11 0.5 9 V3.5 Z"/><rect x="3" y="4" width="14" height="5" rx="1.5" fill="#fff"/><rect x="4" y="5.2" width="5.2" height="2.6" fill="#2b5a98"/><path d="M10.5 8 L12 5 M13 8 L14.5 5" stroke="#2b5a98" stroke-width="1"/></svg></span><span class="t" style="left:231px;letter-spacing:-0.8px">CP-</span><span class="redact" style="left:252px"></span><span class="t" style="left:315px">-1</span><span class="t" style="left:414px">(ClusterXL) member 1 (</span><span class="t" style="left:636px">) is down (Interface Active Check on member 1 (</span><span class="t" style="left:1010px">) detected a problem ( interface</span><span class="box" style="left:555px;width:83px"></span><span class="box" style="left:926px;width:83px"></span></div>
<div class="row" style="top:465px;background:#ffffff"><span class="t" style="left:-29px">Today, 10:46:25</span><span class="ic" style="left:103px;top:8px"><svg width="20" height="14" viewBox="0 0 20 14"><g fill="#2b5a98"><rect x="0" y="0.3" width="6.2" height="3.4" rx="1.5"/><rect x="7.4" y="0.3" width="5.2" height="3.4" rx="1.5"/><rect x="13.8" y="0.3" width="6.2" height="3.4" rx="1.5"/><rect x="0" y="5.1" width="5" height="3.4" rx="1.5"/><rect x="6.2" y="5.1" width="7.6" height="3.4" rx="1.5"/><rect x="15" y="5.1" width="5" height="3.4" rx="1.5"/><rect x="0" y="9.9" width="6.2" height="3.4" rx="1.5"/><rect x="7.4" y="9.9" width="5.2" height="3.4" rx="1.5"/><rect x="13.8" y="9.9" width="6.2" height="3.4" rx="1.5"/></g></svg></span><span class="ic" style="left:173px;top:9px"><svg width="14" height="14" viewBox="0 0 14 14"><path fill="#2b5a98" d="M9.2 0.3 C7.4 0.6 6.2 2.3 6.6 4.1 L0.9 9.8 C0.1 10.6 0.3 11.8 1.1 12.4 C1.8 13 2.8 12.9 3.4 12.2 L9 6.6 C10.8 7 12.6 5.8 12.9 4 L13 3.2 L11.2 4.6 L9.3 4.1 L8.9 2.3 L10.3 0.3 Z"/></svg></span><span class="ic" style="left:206px;top:9px"><svg width="20" height="11" viewBox="0 0 20 11"><path fill="#2b5a98" d="M3.5 0 H16.5 L19.5 3.5 V9 Q19.5 11 17.5 11 H2.5 Q0.5 11 0.5 9 V3.5 Z"/><rect x="3" y="4" width="14" height="5" rx="1.5" fill="#fff"/><rect x="4" y="5.2" width="5.2" height="2.6" fill="#2b5a98"/><path d="M10.5 8 L12 5 M13 8 L14.5 5" stroke="#2b5a98" stroke-width="1"/></svg></span><span class="t" style="left:231px;letter-spacing:-0.8px">CP-</span><span class="redact" style="left:252px"></span><span class="t" style="left:315px">-1</span><span class="t" style="left:414px">(ClusterXL) interface eth1-02.307 of member 1 (</span><span class="t" style="left:788px">) is down (receive up, transmit down)</span></div>
<div class="row" style="top:494px;background:#d0e5fd"><span class="t" style="left:-29px">Today, 10:46:25</span><span class="ic" style="left:103px;top:8px"><svg width="20" height="14" viewBox="0 0 20 14"><g fill="#2b5a98"><rect x="0" y="0.3" width="6.2" height="3.4" rx="1.5"/><rect x="7.4" y="0.3" width="5.2" height="3.4" rx="1.5"/><rect x="13.8" y="0.3" width="6.2" height="3.4" rx="1.5"/><rect x="0" y="5.1" width="5" height="3.4" rx="1.5"/><rect x="6.2" y="5.1" width="7.6" height="3.4" rx="1.5"/><rect x="15" y="5.1" width="5" height="3.4" rx="1.5"/><rect x="0" y="9.9" width="6.2" height="3.4" rx="1.5"/><rect x="7.4" y="9.9" width="5.2" height="3.4" rx="1.5"/><rect x="13.8" y="9.9" width="6.2" height="3.4" rx="1.5"/></g></svg></span><span class="ic" style="left:173px;top:9px"><svg width="14" height="14" viewBox="0 0 14 14"><path fill="#2b5a98" d="M9.2 0.3 C7.4 0.6 6.2 2.3 6.6 4.1 L0.9 9.8 C0.1 10.6 0.3 11.8 1.1 12.4 C1.8 13 2.8 12.9 3.4 12.2 L9 6.6 C10.8 7 12.6 5.8 12.9 4 L13 3.2 L11.2 4.6 L9.3 4.1 L8.9 2.3 L10.3 0.3 Z"/></svg></span><span class="ic" style="left:206px;top:9px"><svg width="20" height="11" viewBox="0 0 20 11"><path fill="#2b5a98" d="M3.5 0 H16.5 L19.5 3.5 V9 Q19.5 11 17.5 11 H2.5 Q0.5 11 0.5 9 V3.5 Z"/><rect x="3" y="4" width="14" height="5" rx="1.5" fill="#fff"/><rect x="4" y="5.2" width="5.2" height="2.6" fill="#2b5a98"/><path d="M10.5 8 L12 5 M13 8 L14.5 5" stroke="#2b5a98" stroke-width="1"/></svg></span><span class="t" style="left:231px;letter-spacing:-0.8px">CP-</span><span class="redact" style="left:252px;height:28px"></span><span class="t" style="left:315px">-1</span><span class="t" style="left:414px">(ClusterXL) member 1 (</span><span class="t" style="left:636px">) is down (Interface Active Check on member 1 (</span><span class="t" style="left:1010px">) detected a problem (eth1-02.307)</span><span class="box" style="left:554px;width:80px"></span><span class="box" style="left:929px;width:78px"></span></div>
 <div class="abs" style="left:0;top:30px;width:1175px;height:1px;background:#fafafa"></div>
 <div class="abs" style="left:1175px;top:30px;width:16px;height:501px;background:#dde0e4"></div>
 <div class="abs" style="left:1175px;top:438px;width:16px;height:31px;background:#b3b6b9"></div>
 <div class="abs" style="left:0;top:530px;width:1175px;height:16px;background:#dde0e4"></div>
</div>
<div class="abs" style="left:11px;top:710px;width:1174px;height:16px;background:#dde0e4"></div>
<div class="abs" style="left:54px;top:710px;width:551px;height:16px;background:#b3b6b9"></div>
<div class="abs" style="left:1201px;top:180px;width:1px;height:532px;background:#d5d9de"></div>
<div class="abs" style="left:11px;top:732px;width:1239px;height:1px;background:#dfe3e8"></div>
<div class="abs" style="left:23px;top:740px;width:88px;height:30px;border:1px solid #d7dbe0;background:#fff"></div>
<div class="abs" style="left:38px;top:748px;font-size:13.5px;font-weight:bold;color:#1d1d1d;line-height:16px;transform-origin:0 0;transform:scaleX(0.9)">URLs</div>
<div class="abs" style="left:126px;top:748px;font-size:13.5px;color:#333;line-height:16px;transform-origin:0 0;transform:scaleX(0.88)">Files</div>
<div class="abs" style="left:198px;top:745px;width:1px;height:22px;background:#d7dbe0"></div>

<div class="abs" style="left:1206px;top:180px;width:50px;height:600px;border-left:1px solid #dfe3e8;border-top:1px solid #dfe3e8;background:#fff"></div>
<div class="abs" style="left:1207px;top:211px;width:1px;height:556px;background:#d8dde4"></div>
<div class="abs" style="left:1223px;top:189px;font-size:13px;font-weight:bold;color:#1d1d1d;line-height:16px">Tops</div>
<svg class="abs" style="left:1219px;top:282px" width="8" height="5"><path d="M0 0 H7.5 L3.75 4.5 Z" fill="#444"/></svg>
<div class="abs" style="left:1236px;top:276px;font-size:14px;color:#333;line-height:16px">To</div>
<svg class="abs" style="left:1219px;top:374px" width="8" height="5"><path d="M0 0 H7.5 L3.75 4.5 Z" fill="#444"/></svg>
<div class="abs" style="left:1236px;top:369px;font-size:14px;color:#333;line-height:16px">To</div>
<svg class="abs" style="left:1219px;top:439px" width="8" height="5"><path d="M0 0 H7.5 L3.75 4.5 Z" fill="#444"/></svg>
<div class="abs" style="left:1236px;top:434px;font-size:14px;color:#333;line-height:16px">To</div>
<svg class="abs" style="left:1219px;top:505px" width="8" height="5"><path d="M0 0 H7.5 L3.75 4.5 Z" fill="#444"/></svg>
<div class="abs" style="left:1236px;top:500px;font-size:14px;color:#333;line-height:16px">To</div>
<div class="abs" style="left:1249px;top:399px;width:1px;height:11px;background:#d08a3a"></div>
<div class="abs" style="left:1249px;top:464px;width:1px;height:13px;background:#d08a3a"></div>
<div class="abs" style="left:1249px;top:531px;width:1px;height:10px;background:#d5c5f7"></div>
<div class="abs" style="left:1249px;top:560px;width:1px;height:10px;background:#a9a3f0"></div>
<div class="abs" style="left:1249px;top:590px;width:1px;height:9px;background:#5f86e6"></div>
<div class="abs" style="left:1249px;top:620px;width:1px;height:8px;background:#6d8ee8"></div>
<div class="abs" style="left:1249px;top:647px;width:1px;height:8px;background:#9b95ee"></div>
<div class="abs" style="left:1249px;top:679px;width:1px;height:7px;background:#6d8ee8"></div>
<div class="abs" style="left:1236px;top:711px;width:7px;height:1px;background:#3a3a3a"></div>
<div class="abs" style="left:10px;top:210px;width:1px;height:557px;background:#c8c8c8"></div>
<div class="abs" style="left:11px;top:732px;width:1px;height:35px;background:#e3e7ec"></div>

<div class="abs" style="left:596px;top:712px;width:660px;height:48px;background:#fff;border:1px solid #d8dde3;box-shadow:2px 2px 0 0 #a6a6a6,3px 4px 1px rgba(0,0,0,0.04)"></div>
<div class="abs" style="left:610px;top:729px;font-size:15.6px;color:#333;line-height:17px;transform-origin:0 0;transform:scaleX(0.945)">(ClusterXL) member 1 (</div>
<div class="abs" style="left:843px;top:729px;font-size:15.6px;color:#333;line-height:17px;transform-origin:0 0;transform:scaleX(0.957)">) is down (Interface Active Check on member 1 (</div>
<div class="abs" style="left:1241px;top:729px;font-size:15.6px;color:#333;line-height:17px">)</div>
</body></html>
